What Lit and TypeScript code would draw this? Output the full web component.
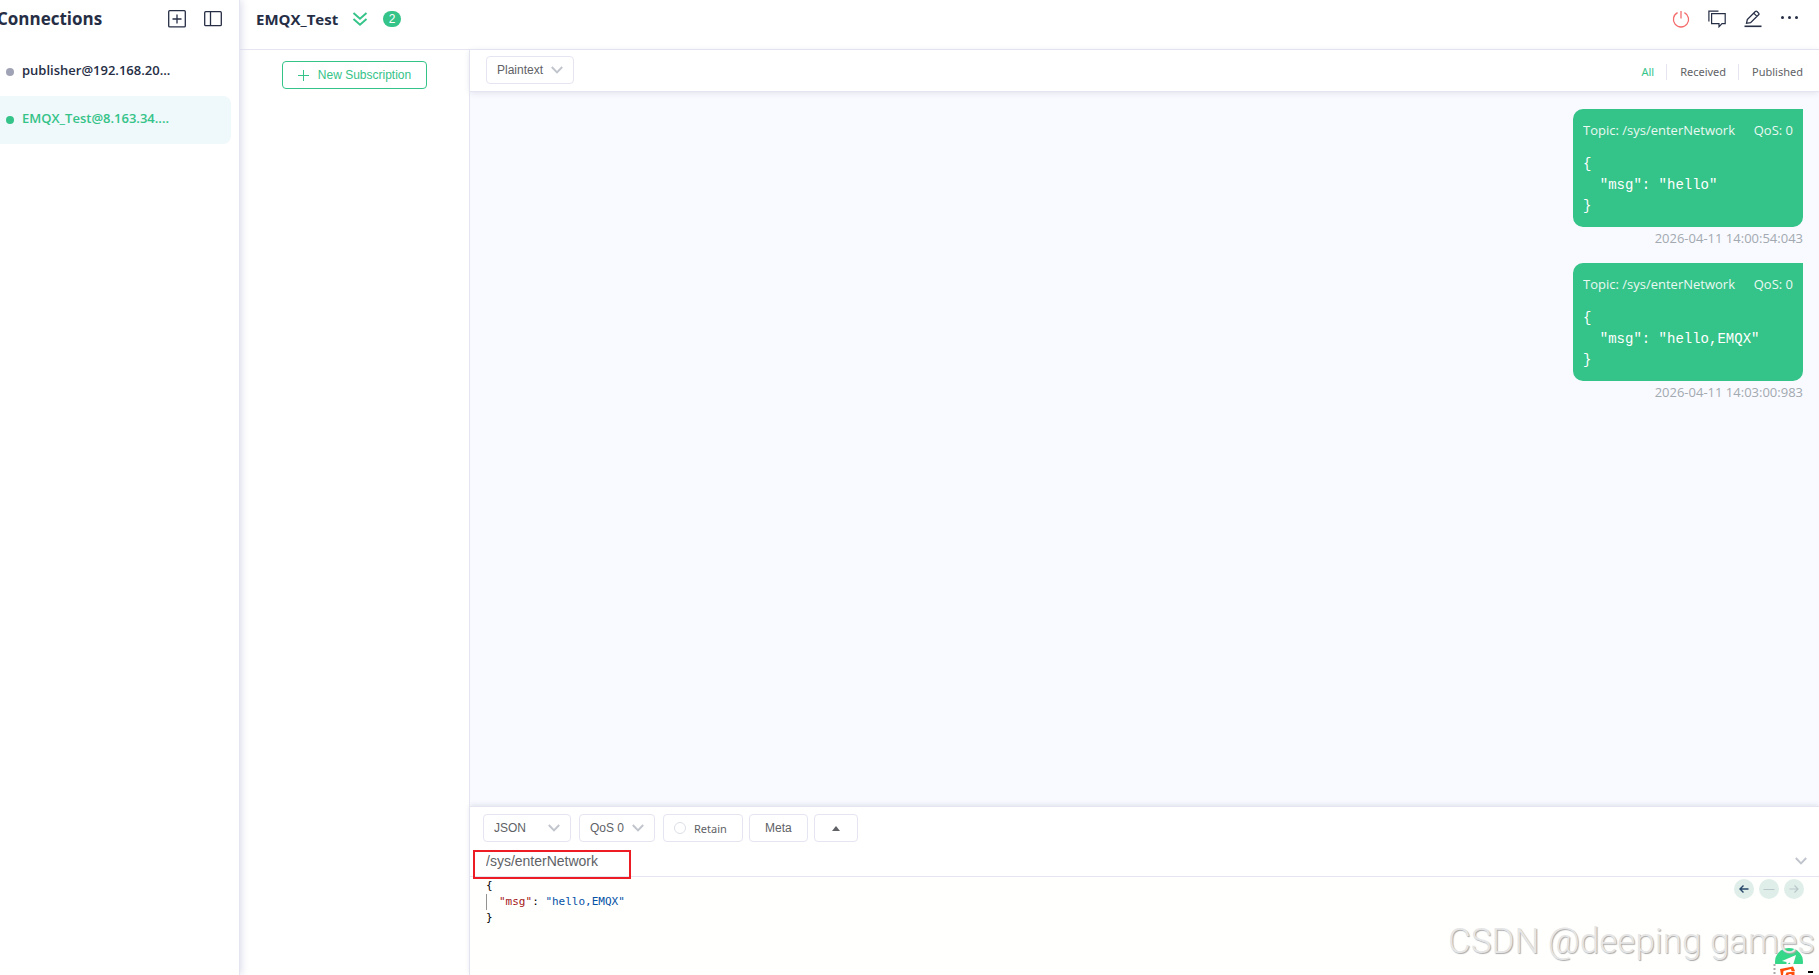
import { LitElement, html, css, svg } from "lit";
import { customElement, property, state } from "lit/decorators.js";
import { classMap } from "lit/directives/class-map.js";

interface Connection {
  name: string;
  online: boolean;
}

interface Message {
  topic: string;
  qos: number;
  payload: string;
  time: string;
}

const chevron = svg`<path d="M.8 1 6 6.400 11.200 1" fill="none" stroke="#c0c4cc" stroke-width="1.900" />`;

@customElement("message-bubble")
export class MessageBubble extends LitElement {
  @property({ attribute: false }) message!: Message;

  static styles = css`
    :host {
      display: block;
    }
    .bubble {
      box-sizing: border-box;
      min-width: 230px;
      padding: 10px;
      border-radius: 10px 0 10px 10px;
      background: #34c388;
      color: #fff;
    }
    .meta {
      display: flex;
      justify-content: space-between;
      gap: 16px;
      font-size: 13px;
      line-height: 22px;
      opacity: 0.9;
    }
    pre {
      margin: 13px 0 0;
      font: 14px/21px "Liberation Mono", monospace;
    }
    time {
      display: block;
      text-align: right;
      color: #a2a9b0;
      font-size: 13px;
      line-height: 22px;
    }
  `;

  render() {
    const m = this.message;
    return html`
      <div class="bubble">
        <div class="meta"><span>Topic: ${m.topic}</span><span>QoS: ${m.qos}</span></div>
        <pre>${m.payload}</pre>
      </div>
      <time>${m.time}</time>
    `;
  }
}

@customElement("app-root")
export class AppRoot extends LitElement {
  @state() private filter = "All";
  @state() private active = 1;

  private connections: Connection[] = [
    { name: "publisher@192.168.20...", online: false },
    { name: "EMQX_Test@8.163.34....", online: true },
  ];

  private messages: Message[] = [
    {
      topic: "/sys/enterNetwork",
      qos: 0,
      payload: '{\n  "msg": "hello"\n}',
      time: "2026-04-11 14:00:54:043",
    },
    {
      topic: "/sys/enterNetwork",
      qos: 0,
      payload: '{\n  "msg": "hello,EMQX"\n}',
      time: "2026-04-11 14:03:00:983",
    },
  ];

  static styles = css`
    :host {
      position: relative;
      display: grid;
      grid-template-columns: 240px minmax(0, 1fr);
      height: 100vh;
      overflow: hidden;
      background: #fff;
      color: #262e45;
      font-family: "Open Sans", "Noto Sans", sans-serif;
    }
    button {
      padding: 0;
      border: 0;
      background: none;
      color: inherit;
      font: inherit;
      cursor: pointer;
    }
    svg {
      display: block;
    }
    .sidebar {
      position: relative;
      z-index: 1;
      box-sizing: border-box;
      border-right: 1px solid #e4e5f0;
      box-shadow: 1px 0 8px #d8d9e8;
      background: #fff;
    }
    .side-head {
      display: flex;
      align-items: center;
      gap: 18px;
      height: 37px;
      margin-left: -3px;
      padding-right: 17px;
    }
    h1,
    h2 {
      margin: 0;
      font-weight: 700;
      line-height: 24px;
    }
    h1 {
      flex: 1;
      font-size: 17px;
    }
    h2 {
      font-size: 15px;
    }
    .connections {
      margin: 11px 0 0;
      padding: 0;
      list-style: none;
    }
    .connection {
      display: flex;
      align-items: center;
      gap: 8px;
      width: 231px;
      height: 48px;
      padding-left: 6px;
      border-radius: 0 8px 8px 0;
      font-size: 13px;
      font-weight: 600;
    }
    .connection.active {
      background: #eff8fa;
      color: #34c388;
    }
    .name {
      padding-bottom: 4px;
    }
    .dot {
      width: 8px;
      height: 8px;
      border-radius: 50%;
      background: #a0a3b5;
    }
    .dot.online {
      background: #34c388;
    }
    .main {
      display: grid;
      grid-template-rows: auto minmax(0, 1fr);
    }
    .header {
      display: flex;
      align-items: center;
      height: 37px;
      padding: 0 21px 12px 16px;
      border-bottom: 1px solid #e4e5f0;
    }
    .expand {
      margin: 0 15px 0 14px;
    }
    .badge {
      width: 18px;
      height: 16px;
      border-radius: 8px;
      background: #34c388;
      color: #fff;
      font: 12px/17px "Liberation Sans", sans-serif;
      text-align: center;
    }
    .actions {
      display: flex;
      gap: 18px;
      margin-left: auto;
    }
    .body {
      display: grid;
      grid-template-columns: 229px minmax(0, 1fr);
      min-height: 0;
    }
    .subs {
      padding-top: 11px;
    }
    .new-sub {
      display: flex;
      align-items: center;
      justify-content: center;
      gap: 9px;
      box-sizing: border-box;
      width: 145px;
      height: 28px;
      margin: 0 auto;
      border: 1px solid #34c388;
      border-radius: 4px;
      color: #34c388;
      font: 12px "Liberation Sans", sans-serif;
    }
    .chat {
      display: grid;
      grid-template-rows: auto minmax(0, 1fr) auto;
      border-left: 1px solid #e4e5f0;
    }
    .toolbar {
      z-index: 1;
      display: flex;
      align-items: center;
      justify-content: space-between;
      height: 36px;
      padding: 2px 16px 3px;
      border-bottom: 1px solid #e4e5f0;
      box-shadow: 0 1px 6px #dfe1ec;
      background: #fff;
    }
    .select {
      display: grid;
      align-items: center;
      width: 88px;
    }
    .select.narrow {
      width: 76px;
    }
    .select > * {
      grid-area: 1 / 1;
    }
    .select svg {
      justify-self: end;
      margin-right: 11px;
      pointer-events: none;
    }
    select,
    .box {
      box-sizing: border-box;
      height: 28px;
      border: 1px solid #e4e5f0;
      border-radius: 4px;
      background: #fff;
      color: #606266;
      font: 12px "Liberation Sans", sans-serif;
    }
    select {
      width: 100%;
      padding: 0 10px;
      appearance: none;
    }
    .filters {
      display: flex;
      align-items: center;
      padding-top: 4px;
      color: #606266;
      font: 11px/16px "Noto Sans", sans-serif;
    }
    .filters button {
      padding: 0 0 0 13px;
    }
    .filters button + button {
      margin-left: 12px;
      border-left: 1px solid #e4e5f0;
    }
    .filters .on {
      color: #34c388;
    }
    .messages {
      display: flex;
      flex-direction: column;
      align-items: flex-end;
      gap: 14px;
      padding: 17px 16px 0 0;
      overflow: hidden;
      background: #f9faff;
    }
    .publish {
      z-index: 1;
      border-top: 1px solid #e4e5f0;
      box-shadow: 0 -1px 5px #dfe1ec;
      background: #fff;
    }
    .options {
      display: flex;
      align-items: center;
      gap: 8px;
      padding: 7px 13px 0;
    }
    .retain {
      display: flex;
      align-items: center;
      gap: 8px;
      padding: 0 15px 0 10px;
      font: 11px "Noto Sans", sans-serif;
    }
    .retain input {
      width: 12px;
      height: 12px;
      margin: 0;
      border: 1px solid #dcdfe6;
      border-radius: 50%;
      appearance: none;
    }
    .extras {
      display: flex;
      gap: 6px;
    }
    .meta-btn {
      width: 59px;
    }
    .up {
      display: grid;
      place-items: center;
      width: 44px;
    }
    .topic {
      display: flex;
      align-items: center;
      height: 31px;
      padding: 3px 12px 0 16px;
      border-bottom: 1px solid #e4e5f0;
    }
    .topic input {
      flex: 1;
      min-width: 0;
      height: 28px;
      padding: 0;
      border: 0;
      outline: 0;
      background: none;
      color: #606266;
      font: 14px "Liberation Sans", sans-serif;
    }
    .highlight {
      position: absolute;
      left: 473px;
      bottom: 96px;
      box-sizing: border-box;
      width: 158px;
      height: 29px;
      border: 2px solid #ed1c24;
      pointer-events: none;
      z-index: 2;
    }
    .editor {
      display: flex;
      justify-content: space-between;
      height: 98px;
      padding: 0 15px 0 16px;
      background: #fffffe;
    }
    .code {
      margin: 1px 0 0;
      color: #000;
      font: 11px/16px "DejaVu Sans Mono", monospace;
    }
    .line {
      display: block;
    }
    .line.indented {
      padding-left: 12px;
      border-left: 1px solid #939393;
    }
    .key {
      color: #a31515;
    }
    .value {
      color: #0451a5;
    }
    .history {
      display: flex;
      gap: 5px;
      padding-top: 2px;
    }
    .history button {
      display: grid;
      place-items: center;
      width: 20px;
      height: 20px;
      border-radius: 50%;
      background: #dfeee8;
    }
    .corner {
      position: absolute;
      right: 0;
      bottom: 0;
      z-index: 2;
    }
    .watermark {
      position: absolute;
      right: 4px;
      bottom: 11px;
      z-index: 3;
      color: #e6e6e6;
      font: 300 35px/44px Roboto, "Open Sans", sans-serif;
      text-shadow: 1px 1px 1px #aaa;
      pointer-events: none;
    }
  `;

  private select(label: string, options: string[], narrow = false) {
    return html`
      <div class=${classMap({ select: true, narrow })}>
        <select aria-label=${label}>
          ${options.map((o) => html`<option>${o}</option>`)}
        </select>
        <svg width="12" height="8" viewBox="0 0 12 8">${chevron}</svg>
      </div>
    `;
  }

  render() {
    return html`
      <aside class="sidebar">
        <div class="side-head">
          <h1>Connections</h1>
          <button aria-label="New connection">
            <svg width="18" height="18" viewBox="0 0 18 18" fill="none" stroke="#262e45" stroke-width="1.3">
              <rect x="0.700" y="0.700" width="16.600" height="16.200" rx="1" />
              <path d="M9 4.500v9M4.500 9h9" />
            </svg>
          </button>
          <button aria-label="Toggle list">
            <svg width="18" height="18" viewBox="0 0 18 18" fill="none" stroke="#262e45" stroke-width="1.3">
              <rect x="0.700" y="1.700" width="16.600" height="14" rx="1" />
              <path d="M6.500 2v13.500" />
            </svg>
          </button>
        </div>
        <ul class="connections">
          ${this.connections.map(
            (c, i) => html`
              <li>
                <button
                  class=${classMap({ connection: true, active: i === this.active })}
                  @click=${() => (this.active = i)}
                >
                  <span class=${classMap({ dot: true, online: c.online })}></span>
                  <span class="name">${c.name}</span>
                </button>
              </li>
            `,
          )}
        </ul>
      </aside>

      <main class="main">
        <header class="header">
          <h2>EMQX_Test</h2>
          <button class="expand" aria-label="Expand">
            <svg width="16" height="16" viewBox="0 0 16 16" fill="none" stroke="#34c388" stroke-width="1.9">
              <path d="M1.500 2 8 7.800 14.500 2M1.500 8 8 13.800 14.500 8" />
            </svg>
          </button>
          <span class="badge">2</span>
          <div class="actions">
            <button aria-label="Disconnect">
              <svg width="18" height="18" viewBox="0 0 18 18" fill="none" stroke="#f56c6c" stroke-width="1.3">
                <path d="M5.600 2.600a7.600 7.600 0 1 0 6.800 0M9 1v7.500" />
              </svg>
            </button>
            <button aria-label="Messages">
              <svg width="18" height="18" viewBox="0 0 18 18" fill="none" stroke="#262e45" stroke-width="1.2">
                <path d="M.9 11.500V1.100h9.600M3.600 3.600h13.600v10h-3.200l-3 3.200v-3.200h-7.400z" />
              </svg>
            </button>
            <button aria-label="Edit">
              <svg width="18" height="18" viewBox="0 0 18 18" fill="none" stroke="#262e45" stroke-width="1.3">
                <path d="M2.500 13.300 3.300 9.500 11.300 1.500Q12.200.8 13 1.500L14.600 3.100Q15.400 4 14.600 4.800L6.600 12.700ZM9.700 3.100 13 6.400" />
                <path d="M.5 16.300h17" stroke-width="1.600" />
              </svg>
            </button>
            <button aria-label="More">
              <svg width="18" height="18" viewBox="0 0 18 18" fill="#262e45">
                <circle cx="2.500" cy="7.500" r="1.500" /><circle cx="9.500" cy="7.500" r="1.500" /><circle cx="16.500" cy="7.500" r="1.500" />
              </svg>
            </button>
          </div>
        </header>

        <div class="body">
          <div class="subs">
            <button class="new-sub">
              <svg width="11" height="11" viewBox="0 0 11 11" stroke="#34c388"><path d="M5.500 0v11M0 5.500h11" /></svg>
              New Subscription
            </button>
          </div>

          <section class="chat">
            <div class="toolbar">
              ${this.select("Payload format", ["Plaintext", "JSON", "Hex", "Base64"])}
              <div class="filters">
                ${["All", "Received", "Published"].map(
                  (f) => html`
                    <button class=${classMap({ on: f === this.filter })} @click=${() => (this.filter = f)}>${f}</button>
                  `,
                )}
              </div>
            </div>

            <div class="messages">
              ${this.messages.map((m) => html`<message-bubble .message=${m}></message-bubble>`)}
            </div>

            <form class="publish" @submit=${(e: Event) => e.preventDefault()}>
              <div class="options">
                ${this.select("Publish format", ["JSON", "Plaintext", "Hex"])}
                ${this.select("QoS", ["QoS 0", "QoS 1", "QoS 2"], true)}
                <div class="extras">
                  <label class="box retain"><input type="checkbox" />Retain</label>
                  <button class="box meta-btn" type="button">Meta</button>
                  <button class="box up" type="button" aria-label="Collapse">
                    <svg width="8" height="5" viewBox="0 0 8 5"><path d="M0 5 4 0l4 5z" fill="#606266" /></svg>
                  </button>
                </div>
              </div>
              <div class="topic">
                <input type="text" aria-label="Topic" .value=${"/sys/enterNetwork"} />
                <button type="button" aria-label="Topic history">
                  <svg width="12" height="8" viewBox="0 0 12 8">${chevron}</svg>
                </button>
              </div>
              <div class="editor">
                <code class="code"
                  ><span class="line">{</span
                  ><span class="line indented"
                    ><span class="key">"msg"</span>: <span class="value">"hello,EMQX"</span></span
                  ><span class="line">}</span></code
                >
                <div class="history">
                  <button type="button" aria-label="Previous">
                    <svg width="10" height="10" viewBox="0 0 10 10" fill="none" stroke="#28486a" stroke-width="1.400">
                      <path d="M9.500 5H1M4.500 1.500 1 5l3.500 3.500" />
                    </svg>
                  </button>
                  <button type="button" aria-label="Remove">
                    <svg width="12" height="10" viewBox="0 0 12 10" stroke="#b9c6ca"><path d="M.5 5.500h11" /></svg>
                  </button>
                  <button type="button" aria-label="Next">
                    <svg width="10" height="10" viewBox="0 0 10 10" fill="none" stroke="#b9c6ca" stroke-width="1.200">
                      <path d="M.5 5H9M5.500 1.500 9 5 5.500 8.500" />
                    </svg>
                  </button>
                </div>
              </div>
            </form>
          </section>
        </div>
      </main>

      <div class="highlight"></div>
      <svg class="corner" width="48" height="28" viewBox="0 0 48 28">
        <circle cx="18" cy="15" r="14" fill="#35d888" />
        <path d="M11 14 25 8l-3.500 12-3-4.500-3 2.500v-3z" fill="#fff" />
        <path d="M3 17h45v11H3z" fill="#fffffe" />
        <path d="M3.500 17v11" stroke="#aaa" stroke-width="2" stroke-dasharray="2 2" />
        <path d="M9 22 22 19.500 24 24h-3.500l-.5-2-7.500 2-.5 4H10z" fill="#ff4d0c" />
        <path d="M14.500 28l1-2.500 8-1V28h-3v-1l-3 .3v.7z" fill="#ff4d0c" />
        <path d="M37 24h5v2h-5z" fill="#000" />
      </svg>
      <div class="watermark">CSDN @deeping games</div>
    `;
  }
}
